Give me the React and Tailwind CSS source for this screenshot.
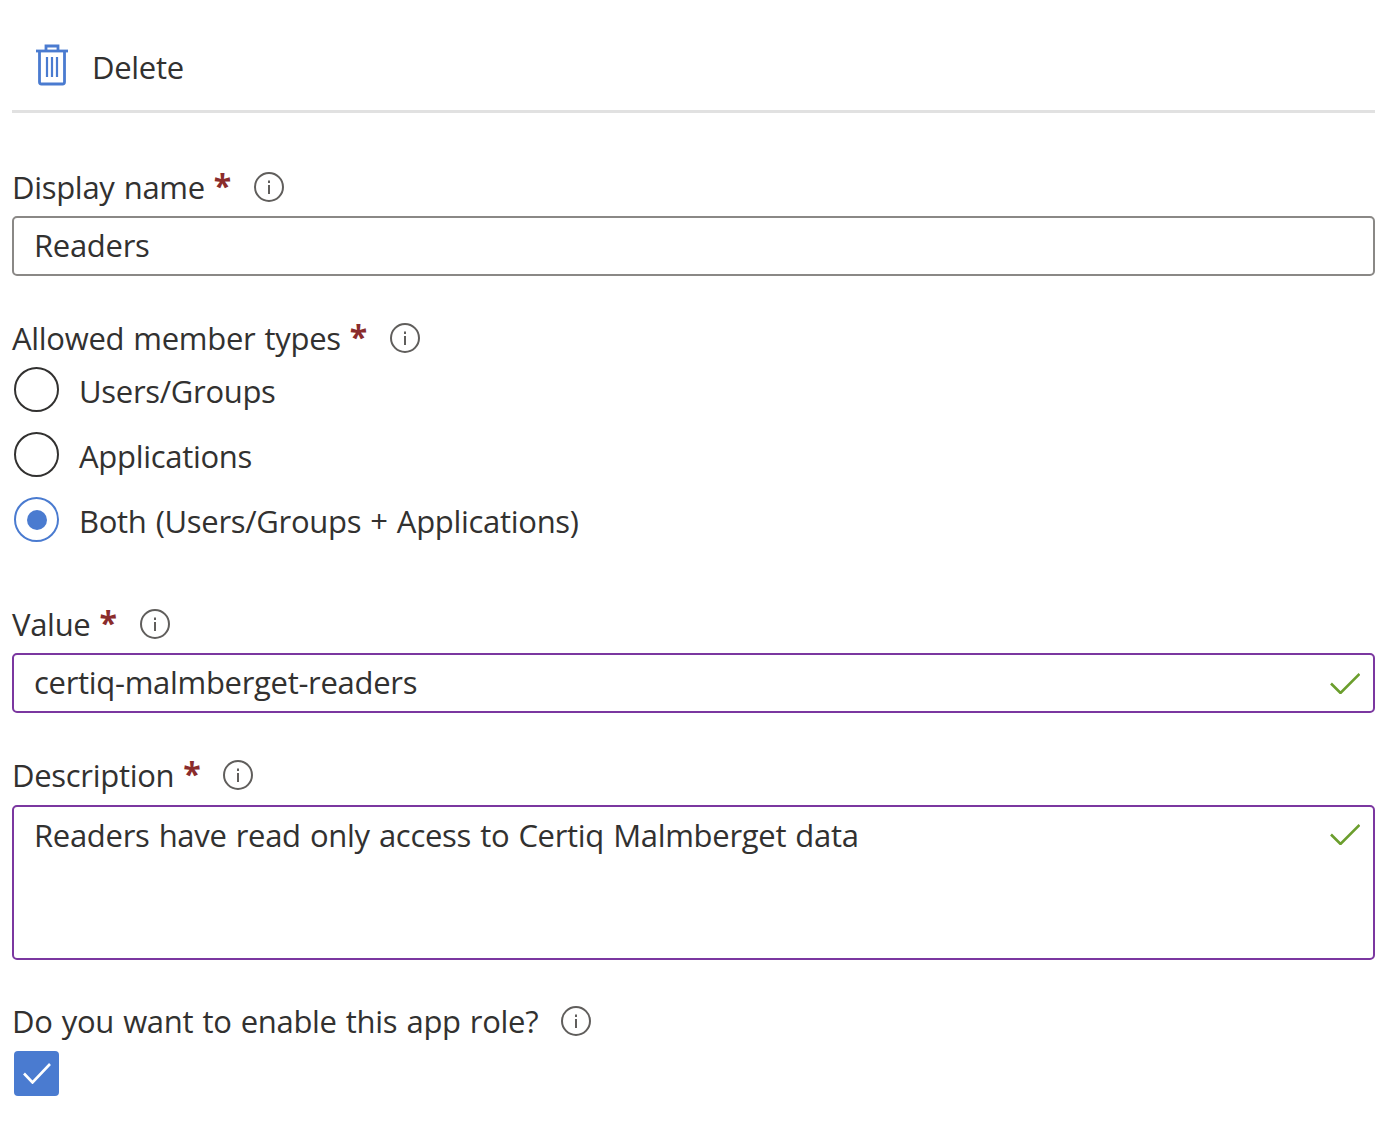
import React from "react";

const font = "font-['Open_Sans','Noto_Sans',sans-serif]";

function InfoIcon() {
  return (
    <svg width="30" height="30" viewBox="0 0 30 30" fill="none" className="ml-[23px] shrink-0">
      <circle cx="15" cy="15" r="14" stroke="#605e5c" strokeWidth="2" />
      <rect x="14" y="13" width="2" height="9" fill="#605e5c" />
      <rect x="14" y="8.5" width="2" height="2.5" fill="#605e5c" />
    </svg>
  );
}

function CheckIcon({ className }) {
  return (
    <svg width="30" height="21" viewBox="0 0 30 21" fill="none" className={"shrink-0 " + (className || "")}>
      <path d="M1 10.5 L10.5 20 L29.5 1" stroke="#6b9e2d" strokeWidth="2.6" />
    </svg>
  );
}

function Label({ text, required, className }) {
  return (
    <div className={"flex h-10 items-center whitespace-nowrap " + className}>
      <span>{text}</span>
      {required && (
        <span className="ml-[9px] h-10 text-[32px] font-bold leading-[38px] text-[#8a2c2c]">*</span>
      )}
      <InfoIcon />
    </div>
  );
}

function Radio({ label, checked, className }) {
  return (
    <div className={"ml-0.5 flex h-[45px] items-center gap-5 " + className}>
      <div
        className={
          "flex h-[45px] w-[45px] items-center justify-center rounded-full border-[2.5px] " +
          (checked ? "border-[#4a7bd0]" : "border-[#323130]")
        }
      >
        {checked && <div className="h-5 w-5 rounded-full bg-[#4a7bd0]" />}
      </div>
      <span className="pt-0.5">{label}</span>
    </div>
  );
}

export default function App() {
  return (
    <div className={"h-[1132px] w-[1390px] bg-white pl-3 pr-[15px] text-[31px] leading-10 tracking-[-0.3px] [word-spacing:1.4px] text-[#323130] " + font}>
      <div className="flex h-[113px] items-center border-b-[3px] border-[#e1e1e1] pt-[20px]">
        <svg width="34" height="42" viewBox="0 0 34 42" fill="none" className="ml-[23px] shrink-0" stroke="#4a7bd0" strokeWidth="2.8">
          <path d="M1 7 H33" />
          <path d="M11 7 V2 H23 V7" />
          <path d="M4.5 7 V38 Q4.5 40 6.5 40 H27.5 Q29.5 40 29.5 38 V7" />
          <path d="M12 13 V33 M17 13 V33 M22 13 V33" strokeWidth="2.2" />
        </svg>
        <span className="ml-[23px] pt-1">Delete</span>
      </div>

      <Label text="Display name" required className="mt-[54px]" />
      <div className="mt-[9px] flex h-[60px] items-center rounded-[5px] border-[2.5px] border-[#8a8886] pl-5">
        <span className="pb-0.5">Readers</span>
      </div>

      <Label text="Allowed member types" required className="mt-[42px]" />
      <Radio label="Users/Groups" className="mt-[9px]" />
      <Radio label="Applications" className="mt-5" />
      <Radio label="Both (Users/Groups + Applications)" checked className="mt-5" />

      <Label text="Value" required className="mt-[62px]" />
      <div className="mt-[9px] flex h-[60px] items-center justify-between rounded-[5px] border-[2.5px] border-[#7b37a0] pl-5 pr-[13px]">
        <span className="pb-0.5">certiq-malmberget-readers</span>
        <CheckIcon />
      </div>

      <Label text="Description" required className="mt-[42px]" />
      <div className="mt-[10px] flex h-[155px] items-start justify-between rounded-[5px] border-[2.5px] border-[#7b37a0] pl-5 pr-[13px] pt-2">
        <span>Readers have read only access to Certiq Malmberget data</span>
        <CheckIcon className="mt-[9px]" />
      </div>

      <Label text="Do you want to enable this app role?" className="mt-[41px]" />
      <div className="ml-0.5 mt-[10px] flex h-[45px] w-[45px] items-center justify-center rounded-[4px] bg-[#4a7bd0]">
        <svg width="28" height="21" viewBox="0 0 28 21" fill="none">
          <path d="M1 10.5 L9.5 19.5 L27 1" stroke="#ffffff" strokeWidth="2.6" />
        </svg>
      </div>
    </div>
  );
}
